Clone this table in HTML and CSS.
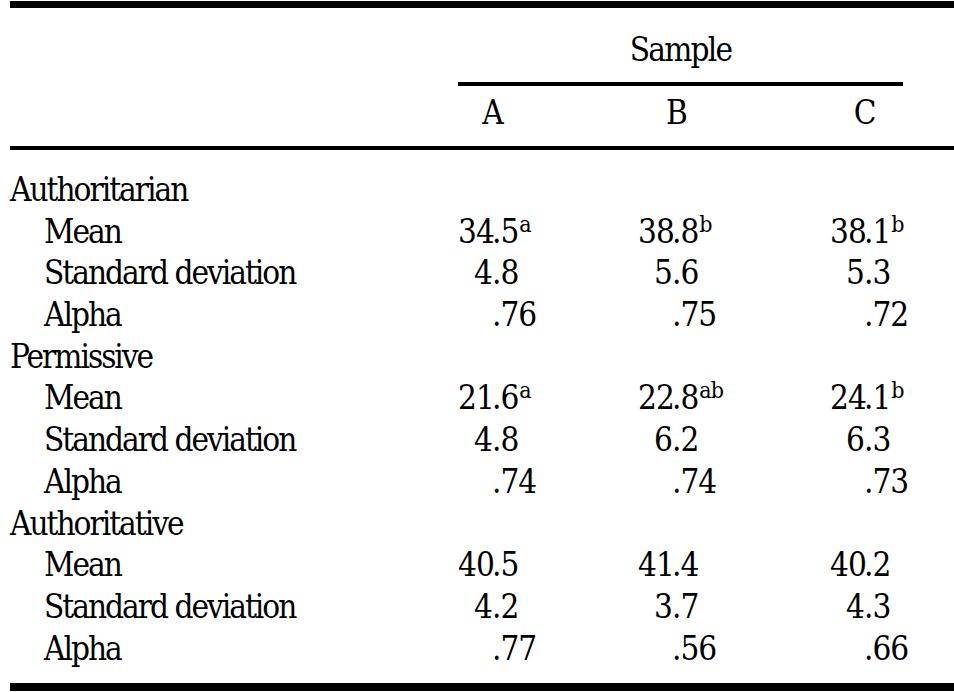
FILE: index.html
```html
<!DOCTYPE html>
<html lang="en">
<head>
<meta charset="utf-8">
<title>Parenting style scales by sample</title>
<link rel="stylesheet" href="styles.css">
</head>
<body>
<div class="table">
  <div class="head">
    <div class="sample">Sample</div>
    <div class="col-head col-a"><span class="letter">A</span></div>
    <div class="col-head col-b"><span class="letter">B</span></div>
    <div class="col-head col-c"><span class="letter">C</span></div>
  </div>
  <div class="body">
    <div class="cat">Authoritarian</div>
    <div class="label">Mean</div>
    <div class="val"><span class="int">34</span>.5<sup>a</sup></div>
    <div class="val"><span class="int">38</span>.8<sup>b</sup></div>
    <div class="val"><span class="int">38</span>.1<sup>b</sup></div>
    <div class="label">Standard deviation</div>
    <div class="val"><span class="int">4</span>.8</div>
    <div class="val"><span class="int">5</span>.6</div>
    <div class="val"><span class="int">5</span>.3</div>
    <div class="label">Alpha</div>
    <div class="val"><span class="int"></span>.76</div>
    <div class="val"><span class="int"></span>.75</div>
    <div class="val"><span class="int"></span>.72</div>

    <div class="cat">Permissive</div>
    <div class="label">Mean</div>
    <div class="val"><span class="int">21</span>.6<sup>a</sup></div>
    <div class="val"><span class="int">22</span>.8<sup>ab</sup></div>
    <div class="val"><span class="int">24</span>.1<sup>b</sup></div>
    <div class="label">Standard deviation</div>
    <div class="val"><span class="int">4</span>.8</div>
    <div class="val"><span class="int">6</span>.2</div>
    <div class="val"><span class="int">6</span>.3</div>
    <div class="label">Alpha</div>
    <div class="val"><span class="int"></span>.74</div>
    <div class="val"><span class="int"></span>.74</div>
    <div class="val"><span class="int"></span>.73</div>

    <div class="cat">Authoritative</div>
    <div class="label">Mean</div>
    <div class="val"><span class="int">40</span>.5</div>
    <div class="val"><span class="int">41</span>.4</div>
    <div class="val"><span class="int">40</span>.2</div>
    <div class="label">Standard deviation</div>
    <div class="val"><span class="int">4</span>.2</div>
    <div class="val"><span class="int">3</span>.7</div>
    <div class="val"><span class="int">4</span>.3</div>
    <div class="label">Alpha</div>
    <div class="val"><span class="int"></span>.77</div>
    <div class="val"><span class="int"></span>.56</div>
    <div class="val"><span class="int"></span>.66</div>
  </div>
</div>
</body>
</html>
```

FILE: styles.css
```css
html, body {
  margin: 0;
  padding: 0;
  background: #fff;
}

body {
  width: 954px;
  height: 692px;
  overflow: hidden;
  color: #000;
  font-family: "DejaVu Serif Condensed", "DejaVu Serif", serif;
  font-stretch: condensed;
  font-size: 33px;
}

.table {
  margin: 1px 0 0 10px;
  width: 944px;
  border-top: 7px solid #000;
  border-bottom: 8px solid #000;
}

.head {
  display: grid;
  grid-template-columns: 448px 180px 192px 124px;
  line-height: 42px;
}

.sample {
  grid-column: 2 / 5;
  width: 445px;
  text-align: center;
  padding: 21px 0 11px;
  border-bottom: 4px solid #000;
  letter-spacing: -1.8px;
}

.col-head {
  padding: 6px 0 12px;
}

.col-a {
  grid-column: 2;
  padding-left: 0;
}

.col-b {
  padding-left: 4px;
}

.letter {
  display: inline-block;
  width: 70px;
  text-align: center;
}

.body {
  display: grid;
  grid-template-columns: 448px 180px 192px 124px;
  grid-auto-rows: 41.7px;
  line-height: 41.7px;
  border-top: 4px solid #000;
  padding: 19px 0 14px;
}

.cat {
  grid-column: 1 / 5;
  letter-spacing: -2px;
}

.label {
  padding-left: 34px;
  letter-spacing: -2px;
}

.val {
  letter-spacing: -1px;
  white-space: nowrap;
}

.int {
  display: inline-block;
  width: 34px;
  text-align: right;
}

.val sup {
  font-size: 23px;
  line-height: 0;
  vertical-align: 11px;
  letter-spacing: -1px;
  margin-left: 1px;
}
```
